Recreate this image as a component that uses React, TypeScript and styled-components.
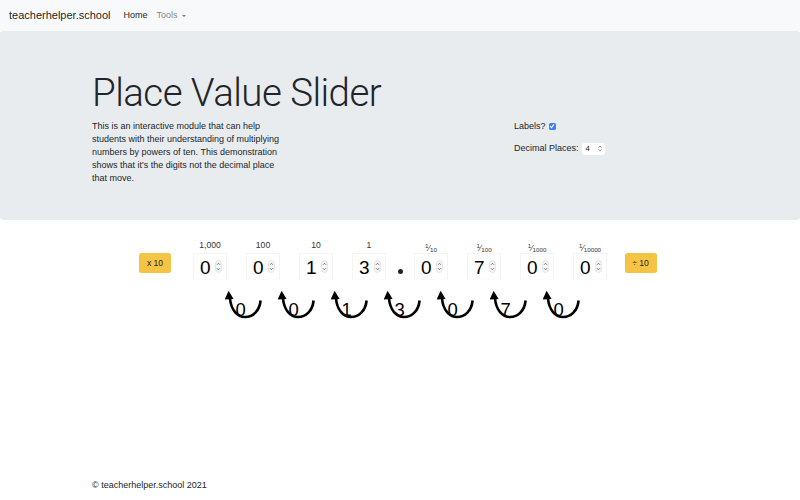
import React from 'react'
import styled, { createGlobalStyle } from 'styled-components'

const GlobalStyle = createGlobalStyle`
  * { box-sizing: border-box; }
  html, body { margin: 0; padding: 0; background: #fff; }
  body {
    font-family: 'Liberation Sans', Arial, sans-serif;
    font-size: 9px;
    line-height: 1.5;
    color: #212529;
  }
`

const Page = styled.div`
  min-height: 100vh;
  display: flex;
  flex-direction: column;
`

const Navbar = styled.nav`
  height: 31px;
  background: #f8f9fa;
  display: flex;
  align-items: center;
  padding: 0 9px;
`

const Brand = styled.a`
  font-size: 11px;
  color: rgba(0, 0, 0, 0.9);
  margin-right: 13px;
`

const NavLink = styled.a<{ $muted?: boolean }>`
  font-size: 9px;
  color: ${({ $muted }) => ($muted ? 'rgba(0, 0, 0, 0.5)' : 'rgba(0, 0, 0, 0.9)')};
  margin-right: 9px;
  display: flex;
  align-items: center;
  gap: 4px;
`

const Caret = styled.span`
  width: 0;
  height: 0;
  border-left: 2.5px solid transparent;
  border-right: 2.5px solid transparent;
  border-top: 2.5px solid rgba(0, 0, 0, 0.5);
`

const Jumbotron = styled.header`
  height: 189px;
  background: #e9ecef;
  border-radius: 3px;
  padding: 37.5px 0 0 92px;
`

const Title = styled.h1`
  margin: 0 0 3px;
  font-family: Roboto, 'Liberation Sans', sans-serif;
  font-weight: 300;
  font-size: 38.5px;
  letter-spacing: -0.55px;
  line-height: 48px;
  color: #212529;
`

const Row = styled.div`
  display: flex;
`

const Lead = styled.p`
  margin: 0;
  width: 210px;
  line-height: 13.2px;
`

const Settings = styled.div`
  margin-left: 212px;
  display: flex;
  flex-direction: column;
  gap: 9.6px;
`

const Field = styled.label`
  display: flex;
  align-items: center;
  gap: 3px;
  line-height: 13.2px;
`

const Check = styled.span`
  width: 7px;
  height: 7px;
  border-radius: 1.5px;
  background: #3b82f6;
  display: inline-flex;
  align-items: center;
  justify-content: center;
`

const Select = styled.span`
  width: 23px;
  height: 12px;
  background: #fff;
  border-radius: 3px;
  display: inline-flex;
  align-items: center;
  justify-content: space-between;
  padding: 0 3px 0 4px;
  font-size: 7.7px;
`

const Main = styled.main`
  flex: 1;
  padding-top: 19.5px;
`

const Board = styled.div`
  width: 518px;
  margin: 0 auto;
  transform: translateX(-2px);
`

const SliderRow = styled.div`
  display: flex;
  align-items: flex-start;
`

const ShiftButton = styled.button<{ $side: 'left' | 'right' }>`
  width: 32px;
  height: 20px;
  margin-top: 13.5px;
  margin-right: ${({ $side }) => ($side === 'left' ? '12.5px' : '0')};
  margin-left: ${({ $side }) => ($side === 'right' ? '8px' : '0')};
  padding: 0;
  border: none;
  border-radius: 2.5px;
  background: #f5c444;
  color: #212529;
  font-family: 'Liberation Sans', Arial, sans-serif;
  font-size: 8.6px;
`

const Place = styled.div`
  width: 53px;
  display: flex;
  flex-direction: column;
  align-items: center;
`

const PlaceLabel = styled.div`
  height: 11px;
  line-height: 11px;
  font-size: 8.6px;
  color: #333;
  margin-bottom: 2.5px;
  white-space: nowrap;
`

const Num = styled.span`
  font-size: 6.2px;
  vertical-align: 2.5px;
`

const Den = styled.span`
  font-size: 6.2px;
  vertical-align: -1.5px;
`

const DigitBox = styled.div`
  width: 34px;
  height: 27px;
  border: 1px solid #f4f4f4;
  border-bottom-color: #fbfbfb;
  display: flex;
  align-items: center;
  justify-content: space-between;
  padding: 0 4px 0 6px;
`

const Digit = styled.span`
  font-size: 19px;
  line-height: 1;
  color: #000;
  margin-top: 2px;
`

const Point = styled.div`
  width: 9px;
  display: flex;
  justify-content: center;
  margin-top: 29.7px;

  &:after {
    content: '';
    width: 5px;
    height: 5px;
    border-radius: 50%;
    background: #222;
  }
`

const ArrowRow = styled.div`
  display: flex;
  padding-left: 86px;
  margin-top: 10px;
`

const ArrowCell = styled.div`
  width: 53px;
  flex: none;
`

const places: { label: React.ReactNode; value: number }[] = [
  { label: '1,000', value: 0 },
  { label: '100', value: 0 },
  { label: '10', value: 1 },
  { label: '1', value: 3 },
  { label: <Frac d="10" />, value: 0 },
  { label: <Frac d="100" />, value: 7 },
  { label: <Frac d="1000" />, value: 0 },
  { label: <Frac d="10000" />, value: 0 },
]

function Frac({ d }: { d: string }) {
  return (
    <>
      <Num>1</Num>⁄<Den>{d}</Den>
    </>
  )
}

function Spinner() {
  return (
    <svg width="7" height="13" viewBox="0 0 7 13">
      <rect x="0.5" y="0.5" width="6" height="12" rx="3" fill="#f6f6f6" stroke="#d6d6d6" strokeWidth="0.6" />
      <path d="M2 4.8 L3.5 3.3 L5 4.8" fill="none" stroke="#555" strokeWidth="0.8" />
      <path d="M2 8.2 L3.5 9.7 L5 8.2" fill="none" stroke="#555" strokeWidth="0.8" />
    </svg>
  )
}

function Arrow({ digit }: { digit: number }) {
  return (
    <svg width="40" height="30" viewBox="0 0 40 30">
      <path
        d="M5 8.5 C6 20 12.5 27 20 27 C28 27 34.5 21 35.6 10.5"
        fill="none"
        stroke="#000"
        strokeWidth="2.6"
      />
      <polygon points="3.6,0.8 -0.4,9.6 8.6,9" fill="#000" />
      <text x="10.5" y="25.5" fontFamily="Liberation Sans, Arial, sans-serif" fontSize="18.5" fill="#000">
        {digit}
      </text>
    </svg>
  )
}

const Footer = styled.footer`
  padding: 0 0 7.4px 92px;
  line-height: 13.2px;
`

export default function App() {
  const whole = places.slice(0, 4)
  const fraction = places.slice(4)
  return (
    <Page>
      <GlobalStyle />
      <Navbar>
        <Brand>teacherhelper.school</Brand>
        <NavLink>Home</NavLink>
        <NavLink $muted>
          Tools <Caret />
        </NavLink>
      </Navbar>
      <Jumbotron>
        <Title>Place Value Slider</Title>
        <Row>
          <Lead>
            This is an interactive module that can help
            <br />
            students with their understanding of multiplying
            <br />
            numbers by powers of ten. This demonstration
            <br />
            shows that it's the digits not the decimal place
            <br />
            that move.
          </Lead>
          <Settings>
            <Field>
              Labels?
              <Check>
                <svg width="6" height="6" viewBox="0 0 6 6">
                  <path d="M1 3.2 L2.4 4.6 L5 1.4" fill="none" stroke="#fff" strokeWidth="1.1" />
                </svg>
              </Check>
            </Field>
            <Field>
              Decimal Places:
              <Select>
                4
                <svg width="4" height="7" viewBox="0 0 4 7">
                  <path d="M0.6 2.6 L2 1.2 L3.4 2.6 M0.6 4.4 L2 5.8 L3.4 4.4" fill="none" stroke="#333" strokeWidth="0.7" />
                </svg>
              </Select>
            </Field>
          </Settings>
        </Row>
      </Jumbotron>
      <Main>
        <Board>
          <SliderRow>
            <ShiftButton $side="left">x 10</ShiftButton>
            {whole.map((p, i) => (
              <Place key={i}>
                <PlaceLabel>{p.label}</PlaceLabel>
                <DigitBox>
                  <Digit>{p.value}</Digit>
                  <Spinner />
                </DigitBox>
              </Place>
            ))}
            <Point />
            {fraction.map((p, i) => (
              <Place key={i}>
                <PlaceLabel>{p.label}</PlaceLabel>
                <DigitBox>
                  <Digit>{p.value}</Digit>
                  <Spinner />
                </DigitBox>
              </Place>
            ))}
            <ShiftButton $side="right">÷ 10</ShiftButton>
          </SliderRow>
          <ArrowRow>
            {places.slice(0, 7).map((p, i) => (
              <ArrowCell key={i}>
                <Arrow digit={p.value} />
              </ArrowCell>
            ))}
          </ArrowRow>
        </Board>
      </Main>
      <Footer>© teacherhelper.school 2021</Footer>
    </Page>
  )
}
